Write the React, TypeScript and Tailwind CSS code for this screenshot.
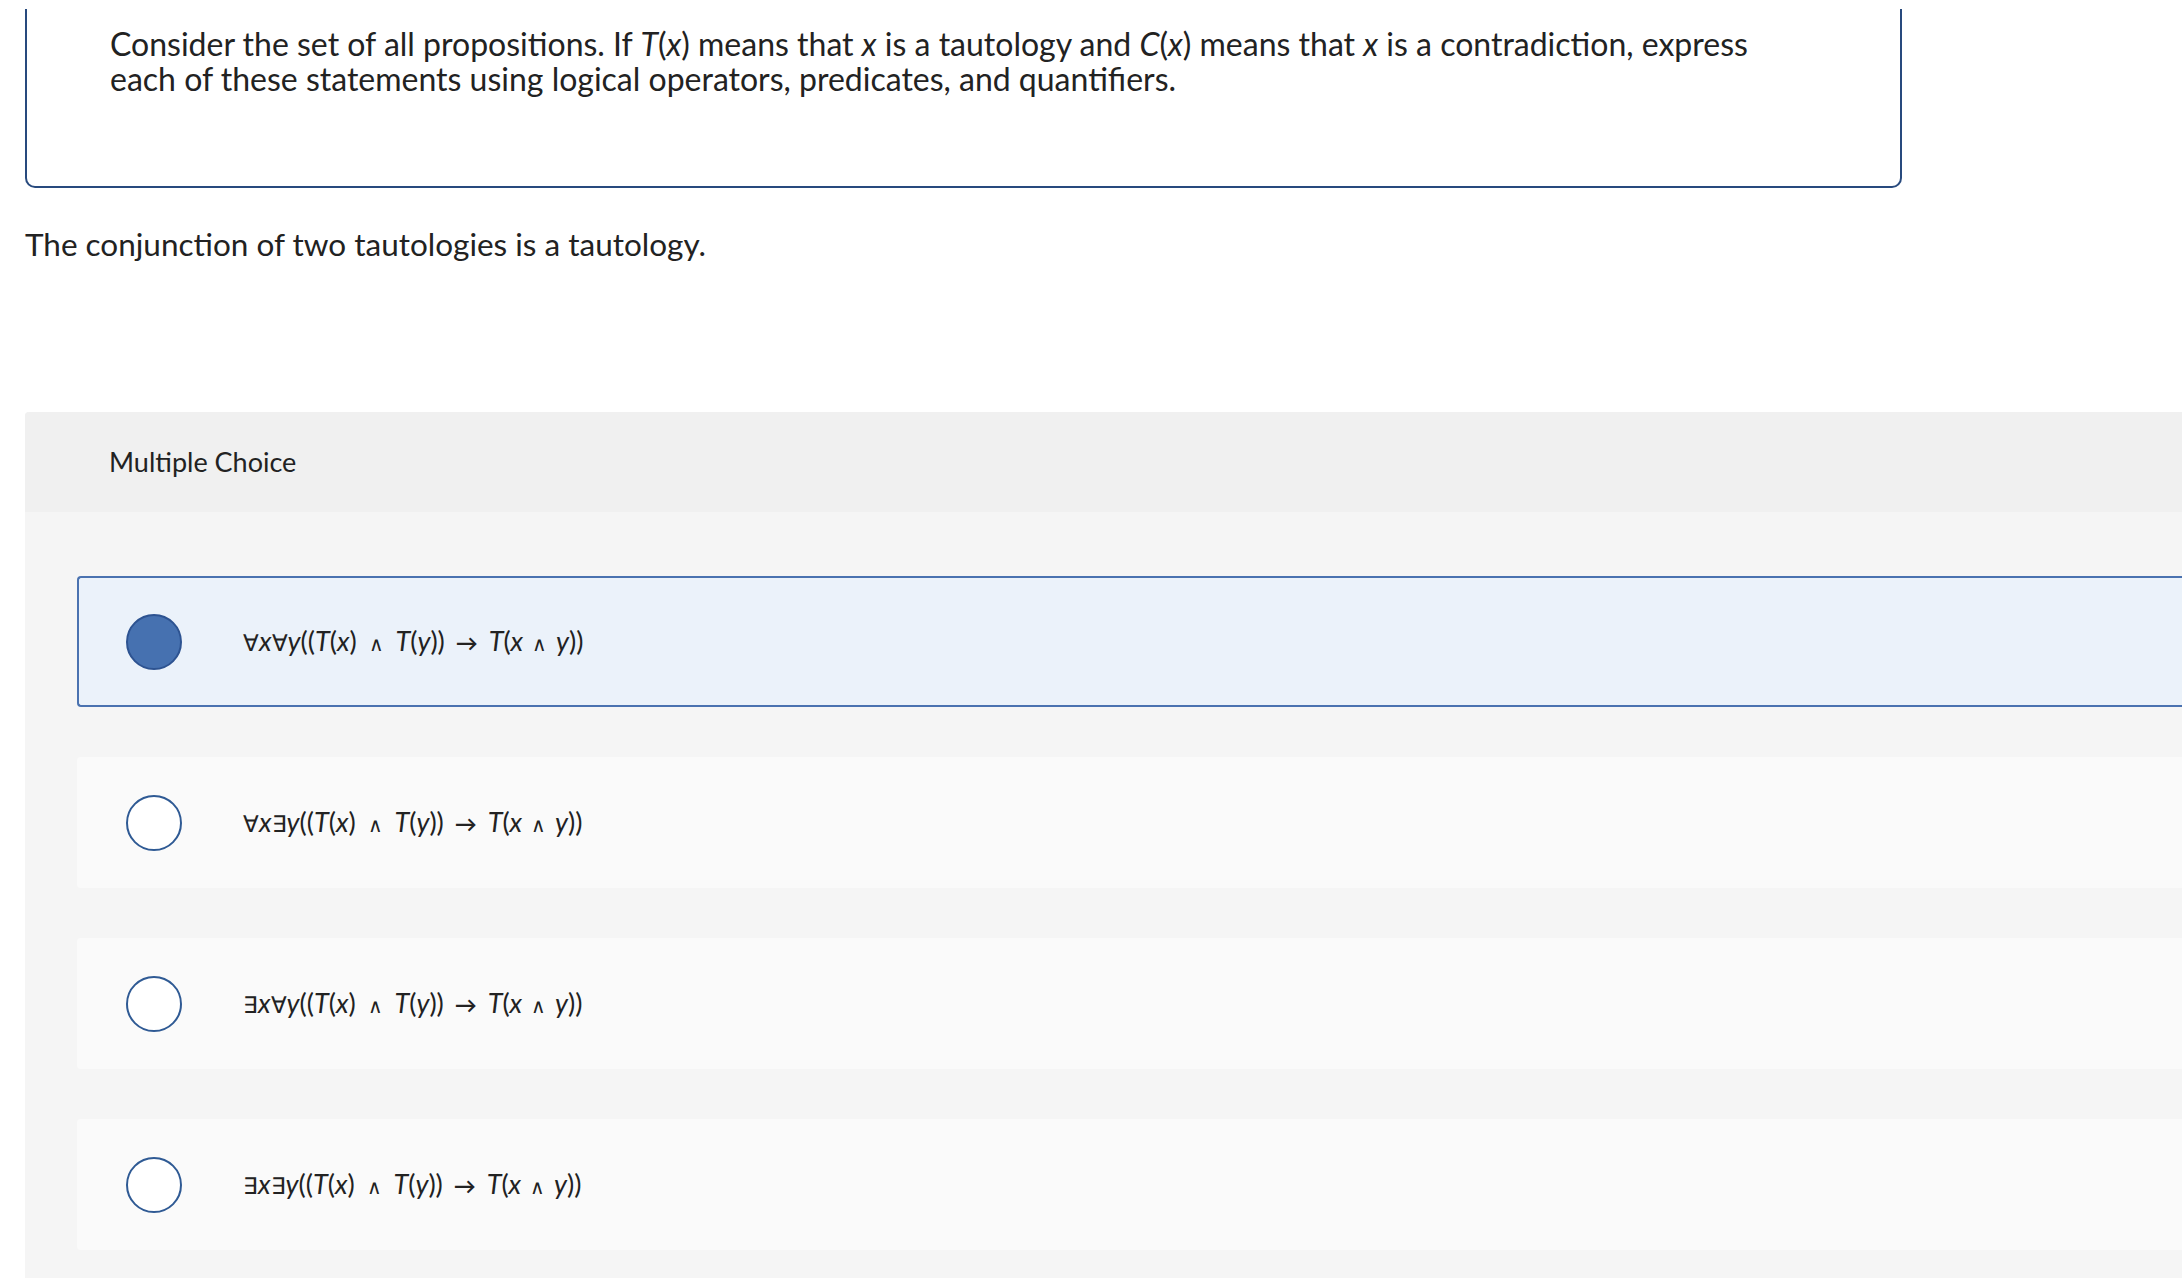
import React from "react";

type Quant = "∀" | "∃";

function Formula({ q1, q2 }: { q1: Quant; q2: Quant }) {
  return (
    <span className="text-[27px] leading-none text-[#222] whitespace-nowrap">
      <span className="text-[23px]">{q1}</span>
      <i>x</i>
      <span className="text-[23px]">{q2}</span>
      <i>y</i>((<i>T</i>(<i>x</i>) <span className="text-[20px] mx-[5px]">∧</span> <i>T</i>(<i>y</i>)){" "}
      <span className="text-[22px] font-bold mx-[4px]">→</span> <i>T</i>(<i>x</i>{" "}
      <span className="text-[20px] mx-[2px]">∧</span> <i>y</i>))
    </span>
  );
}

const options: { q1: Quant; q2: Quant }[] = [
  { q1: "∀", q2: "∀" },
  { q1: "∀", q2: "∃" },
  { q1: "∃", q2: "∀" },
  { q1: "∃", q2: "∃" },
];

export default function App() {
  const selected = 0;

  return (
    <div className="min-h-screen bg-white text-[#222] font-[Lato,sans-serif] overflow-hidden">
      {/* question box, scrolled so its top edge is off screen */}
      <div className="pl-[25px] pr-[280px] pt-[9px]">
        <div className="h-[179px] border-x-2 border-b-2 border-[#284a7e] rounded-b-[10px] pl-[83px] pr-[114px] pt-[17px]">
          <p className="text-[32px] leading-[35px]">
            Consider the set of all propositions. If <i>T</i>(<i>x</i>) means that <i>x</i> is a
            tautology and <i>C</i>(<i>x</i>) means that <i>x</i> is a contradiction, express each
            of these statements using logical operators, predicates, and quantifiers.
          </p>
        </div>
      </div>

      <p className="pl-[25px] mt-[39px] text-[31.5px] leading-[35px]">
        The conjunction of two tautologies is a tautology.
      </p>

      <div className="ml-[25px] mt-[150px] bg-[#f5f5f5] rounded-tl-[4px] pb-[40px]">
        <div className="h-[100px] bg-[#f0f0f0] rounded-tl-[4px] pl-[84px] flex items-center">
          <span className="text-[27px]">Multiple Choice</span>
        </div>

        <div className="pt-[64px] pl-[52px] flex flex-col gap-[50px]">
          {options.map((o, i) => {
            const on = i === selected;
            return (
              <div
                key={i}
                className={
                  on
                    ? "h-[131px] flex items-center border-2 border-r-0 border-[#4a72b0] bg-[#ebf2fa] rounded-l-[4px] pl-[47px]"
                    : "h-[131px] flex items-center border-2 border-r-0 border-transparent bg-[#fafafa] rounded-l-[4px] pl-[47px]"
                }
              >
                <span
                  className={
                    on
                      ? "w-[56px] h-[56px] rounded-full bg-[#4671b0] border-2 border-[#2d5391] shrink-0"
                      : "w-[56px] h-[56px] rounded-full bg-white border-2 border-[#2f5a94] shrink-0"
                  }
                />
                <span className="ml-[61px]">
                  <Formula q1={o.q1} q2={o.q2} />
                </span>
              </div>
            );
          })}
        </div>
      </div>
    </div>
  );
}
